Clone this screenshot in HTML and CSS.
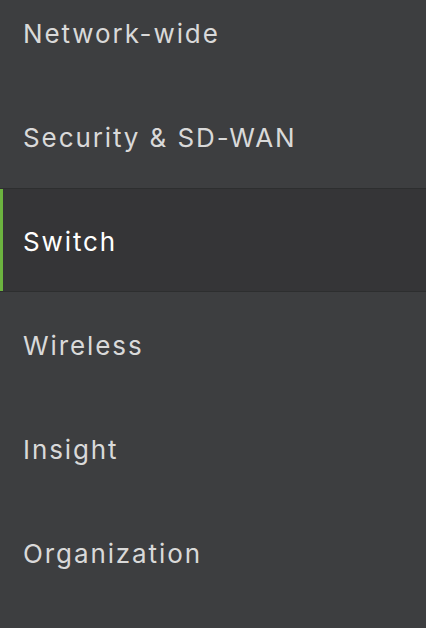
FILE: index.html
```html
<!DOCTYPE html>
<html lang="en">
<head>
<meta charset="utf-8">
<title>Menu</title>
<link rel="stylesheet" href="styles.css">
</head>
<body>
<nav class="menu">
  <ul class="menu-list">
    <li class="menu-item">Network-wide</li>
    <li class="menu-item">Security &amp; SD-WAN</li>
    <li class="menu-item is-active">Switch</li>
    <li class="menu-item">Wireless</li>
    <li class="menu-item">Insight</li>
    <li class="menu-item">Organization</li>
  </ul>
</nav>
</body>
</html>
```
FILE: styles.css
```css
html, body {
  margin: 0;
  padding: 0;
  background: #3d3e40;
  height: 100%;
  overflow: hidden;
}
.menu {
  font-family: Inter, "Noto Sans", sans-serif;
}
.menu-list {
  list-style: none;
  margin: -20px 0 0 0;
  padding: 0;
}
.menu-item {
  box-sizing: border-box;
  height: 104px;
  display: flex;
  align-items: center;
  padding-left: 23px;
  padding-top: 3px;
  font-size: 26px;
  letter-spacing: 1.9px;
  color: #d9d9d9;
  border-top: 1px solid transparent;
  border-bottom: 1px solid transparent;
}
.menu-item.is-active {
  background: #353537;
  border-top-color: #2d2e2f;
  border-bottom-color: #2d2e2f;
  box-shadow: inset 3px 0 0 #6cb33f;
  color: #ffffff;
}
```
